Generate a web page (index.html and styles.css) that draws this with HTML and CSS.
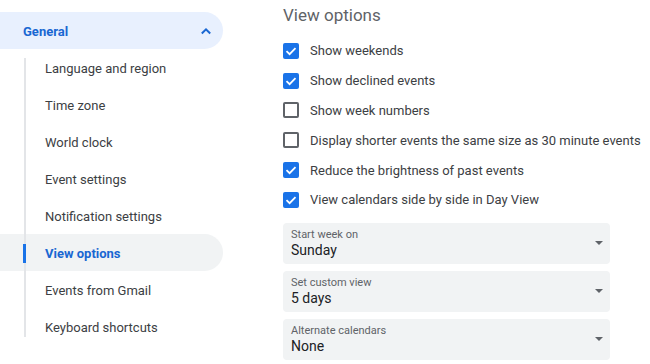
FILE: index.html
```html
<!DOCTYPE html>
<html>
<head>
<meta charset="utf-8">
<link rel="stylesheet" href="styles.css">
</head>
<body>
<div class="page">
  <nav class="sidebar">
    <div class="group-head">
      <span>General</span>
      <svg class="chev" width="12" height="8" viewBox="0 0 12 8"><path d="M1.8 6.5 L6 2.3 L10.2 6.5" fill="none" stroke="#1967d2" stroke-width="2"/></svg>
    </div>
    <ul class="sub">
      <li>Language and region</li>
      <li>Time zone</li>
      <li>World clock</li>
      <li>Event settings</li>
      <li>Notification settings</li>
      <li class="active">View options</li>
      <li>Events from Gmail</li>
      <li>Keyboard shortcuts</li>
    </ul>
  </nav>
  <main class="main">
    <h2 class="title">View options</h2>
    <div class="checks">
      <label class="row"><span class="box on"><svg width="16" height="16" viewBox="0 0 16 16"><path d="M3.5 8.2 L6.6 11.2 L12.5 5.2" fill="none" stroke="#fff" stroke-width="1.8"/></svg></span>Show weekends</label>
      <label class="row"><span class="box on"><svg width="16" height="16" viewBox="0 0 16 16"><path d="M3.5 8.2 L6.6 11.2 L12.5 5.2" fill="none" stroke="#fff" stroke-width="1.8"/></svg></span>Show declined events</label>
      <label class="row"><span class="box"></span>Show week numbers</label>
      <label class="row"><span class="box"></span>Display shorter events the same size as 30 minute events</label>
      <label class="row"><span class="box on"><svg width="16" height="16" viewBox="0 0 16 16"><path d="M3.5 8.2 L6.6 11.2 L12.5 5.2" fill="none" stroke="#fff" stroke-width="1.8"/></svg></span>Reduce the brightness of past events</label>
      <label class="row"><span class="box on"><svg width="16" height="16" viewBox="0 0 16 16"><path d="M3.5 8.2 L6.6 11.2 L12.5 5.2" fill="none" stroke="#fff" stroke-width="1.8"/></svg></span>View calendars side by side in Day View</label>
    </div>
    <div class="selects">
      <div class="select"><div class="sel-text"><div class="sel-label">Start week on</div><div class="sel-value">Sunday</div></div><span class="arrow"></span></div>
      <div class="select"><div class="sel-text"><div class="sel-label">Set custom view</div><div class="sel-value">5 days</div></div><span class="arrow"></span></div>
      <div class="select"><div class="sel-text"><div class="sel-label">Alternate calendars</div><div class="sel-value">None</div></div><span class="arrow"></span></div>
    </div>
  </main>
</div>
</body>
</html>
```
FILE: styles.css
```css
* { box-sizing: border-box; }
html, body { margin: 0; padding: 0; background: #fff; }
body { font-family: Roboto, "Liberation Sans", Arial, sans-serif; color: #3c4043; width: 650px; height: 364px; overflow: hidden; }

.page { display: grid; grid-template-columns: 223px 327px; column-gap: 60px; }

.sidebar { padding-top: 12px; }
.group-head {
  height: 37px; display: flex; align-items: center; justify-content: space-between;
  padding: 1px 11px 0 23px; background: #e8f0fe; border-radius: 0 19px 19px 0;
  color: #1967d2; font-weight: 700; font-size: 13px;
}
.chev { display: block; }

.sub {
  list-style: none; margin: 0; padding: 0;
  background: linear-gradient(#e3e5e8, #e3e5e8) 24px 9px / 2px calc(100% - 17px) no-repeat;
}
.sub li {
  height: 37px; display: flex; align-items: center; padding: 2px 0 0 45px;
  font-size: 13px; color: #3c4043;
}
.sub li.active {
  color: #1967d2; font-weight: 700;
  border-radius: 0 19px 19px 0;
  background:
    linear-gradient(#1a73e8, #1a73e8) 23px 10px / 3px 19px no-repeat,
    linear-gradient(#e3e5e8, #e3e5e8) 24px 0 / 2px 100% no-repeat,
    #f1f3f4;
}

.main { display: flex; flex-direction: column; }
.title { margin: 4px 0 0; height: 22px; font-size: 17px; line-height: 22px; font-weight: 400; color: #5f6368; white-space: nowrap; }
.checks { display: flex; flex-direction: column; margin-top: 10px; }
.row { height: 29.8px; display: flex; align-items: center; gap: 11px; font-size: 13px; color: #3c4043; white-space: nowrap; }
.box { width: 16px; height: 16px; border: 2px solid #5f6368; border-radius: 2px; flex: none; display: flex; align-items: center; justify-content: center; }
.box.on { background: #1a73e8; border: none; }
.box svg { display: block; }

.selects { display: flex; flex-direction: column; gap: 7px; margin-top: 8px; }
.select {
  height: 41px; background: #f1f3f4; border-radius: 4px; display: flex; align-items: center; justify-content: space-between;
  padding: 0 7px 0 8px;
}
.sel-text { display: flex; flex-direction: column; }
.sel-label { font-size: 11px; line-height: 14px; color: #5f6368; }
.sel-value { font-size: 14px; line-height: 16px; color: #202124; }
.arrow { width: 0; height: 0; border-left: 4px solid transparent; border-right: 4px solid transparent; border-top: 4px solid #5f6368; }
```
